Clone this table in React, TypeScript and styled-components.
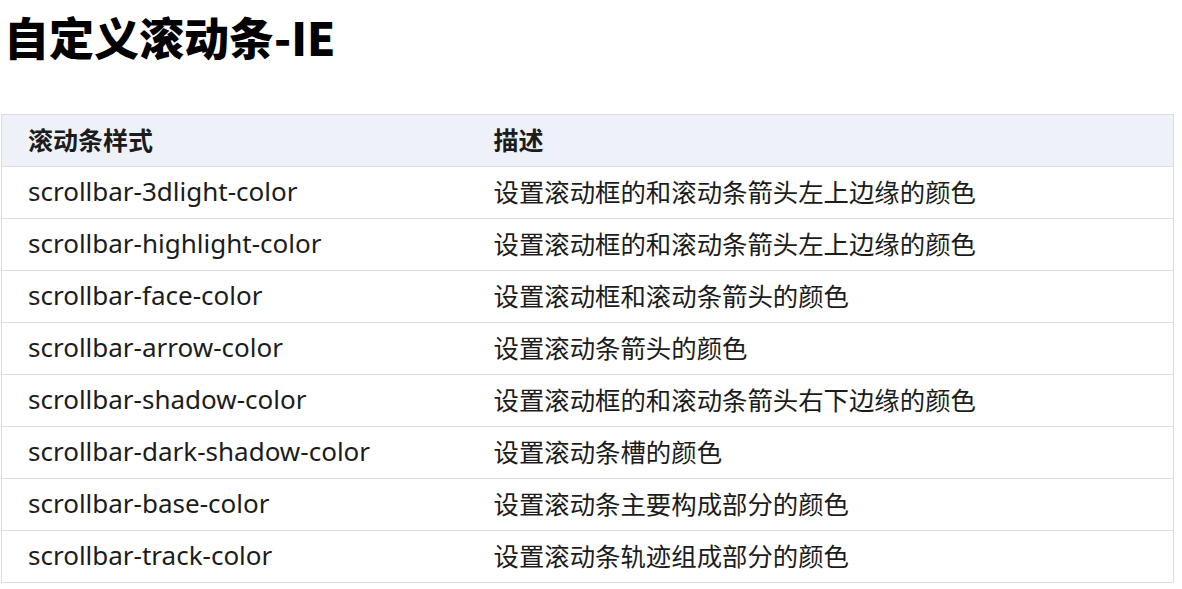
import React from "react";
import styled, { createGlobalStyle } from "styled-components";

const GlobalStyle = createGlobalStyle`
  html, body {
    margin: 0;
    padding: 0;
    background: #ffffff;
  }
  body {
    font-family: "Noto Sans", "Noto Sans CJK SC", sans-serif;
    color: #1a1a1a;
  }
`;

const Page = styled.div`
  width: 1182px;
  height: 589px;
  padding: 4px 0 0 1px;
  box-sizing: border-box;
  overflow: hidden;
`;

const Title = styled.h1`
  margin: 0 0 44px 3px;
  font-family: "Noto Sans CJK SC", sans-serif;
  font-size: 45px;
  font-weight: 900;
  line-height: 66px;
  color: #000;
`;

const Table = styled.table`
  width: 1173px;
  border-collapse: collapse;
  border: 1px solid #d9dcea;
`;

const HeadRow = styled.tr`
  background: #eef1f8;
`;

const Cell = styled.td<{ $head?: boolean }>`
  height: 52px;
  padding: 0 0 3px 26px;
  border-bottom: 1px solid #d9dcea;
  font-size: ${(p) => (p.$head ? "25px" : "26px")};
  font-weight: ${(p) => (p.$head ? 700 : 400)};
  font-family: "Noto Sans", "Noto Sans CJK SC", sans-serif;
  color: #1c1c1c;
  text-align: left;
  vertical-align: middle;
  white-space: nowrap;
  box-sizing: border-box;
`;

const FirstCell = styled(Cell)`
  width: 466px;
`;

const Zh = styled.span`
  font-family: "Noto Sans CJK SC", sans-serif;
  font-size: 25.4px;
`;

const rows: [string, string][] = [
  ["scrollbar-3dlight-color", "设置滚动框的和滚动条箭头左上边缘的颜色"],
  ["scrollbar-highlight-color", "设置滚动框的和滚动条箭头左上边缘的颜色"],
  ["scrollbar-face-color", "设置滚动框和滚动条箭头的颜色"],
  ["scrollbar-arrow-color", "设置滚动条箭头的颜色"],
  ["scrollbar-shadow-color", "设置滚动框的和滚动条箭头右下边缘的颜色"],
  ["scrollbar-dark-shadow-color", "设置滚动条槽的颜色"],
  ["scrollbar-base-color", "设置滚动条主要构成部分的颜色"],
  ["scrollbar-track-color", "设置滚动条轨迹组成部分的颜色"],
];

export default function App() {
  return (
    <Page>
      <GlobalStyle />
      <Title>自定义滚动条-IE</Title>
      <Table>
        <thead>
          <HeadRow>
            <FirstCell as="th" $head>
              滚动条样式
            </FirstCell>
            <Cell as="th" $head>
              描述
            </Cell>
          </HeadRow>
        </thead>
        <tbody>
          {rows.map(([name, desc]) => (
            <tr key={name}>
              <FirstCell>{name}</FirstCell>
              <Cell>
                <Zh>{desc}</Zh>
              </Cell>
            </tr>
          ))}
        </tbody>
      </Table>
    </Page>
  );
}
